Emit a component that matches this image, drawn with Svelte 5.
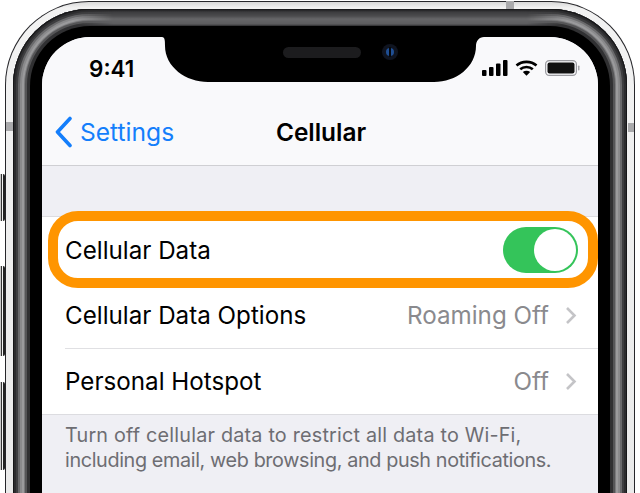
<script>
  const rows = [
    { label: 'Cellular Data Options', value: 'Roaming Off' },
    { label: 'Personal Hotspot', value: 'Off' }
  ];
</script>

<div class="page">
  <span class="side-btn btn-a"></span>
  <span class="side-btn btn-b"></span>
  <span class="side-btn btn-c"></span>
  <div class="ring-outer">
    <div class="ring-silver">
      <div class="ring-steel">
        <div class="ring-black">
          <div class="screen">
            <svg class="notch" width="322" height="46" viewBox="0 0 322 46">
              <path d="M0 0H322C317 0 314 4 314 9 C314 30 294 45 272 45H46C24 45 3 30 3 9C3 4 3 0 0 0Z" fill="#000" />
              <rect x="121" y="10" width="78" height="11" rx="5.5" fill="#1c1c1e" />
              <circle cx="228" cy="15" r="8" fill="#0f1420" />
              <circle cx="228" cy="15" r="4" fill="#1f4f94" />
              <rect x="227" y="10" width="2" height="10" fill="#05070c" />
            </svg>

            <header class="status">
              <span class="time">9:41</span>
              <div class="indicators">
                <svg width="26" height="16" viewBox="0 0 26 16">
                  <rect x="0" y="10" width="4.5" height="6" rx="1" />
                  <rect x="7" y="7" width="4.5" height="9" rx="1" />
                  <rect x="14" y="3.5" width="4.5" height="12.5" rx="1" />
                  <rect x="21" y="0" width="4.5" height="16" rx="1" />
                </svg>
                <svg width="23" height="16" viewBox="0 0 23 16">
                  <path d="M1.5 5.5C7 .6 16 .6 21.5 5.5" fill="none" stroke="#000" stroke-width="2.6" />
                  <path d="M5.2 9.2C8.6 6.2 14.4 6.2 17.8 9.2" fill="none" stroke="#000" stroke-width="2.6" />
                  <path d="M7.8 12 11.5 15.8 15.2 12C13 10.2 10 10.2 7.8 12Z" />
                </svg>
                <svg width="35" height="16" viewBox="0 0 35 16">
                  <rect x="0.6" y="0.6" width="30.8" height="14.8" rx="3.6" fill="none" stroke="#9b9ba0" stroke-width="1.2" />
                  <rect x="2.5" y="2.5" width="27" height="11" rx="2" fill="#111" />
                  <rect x="33" y="5.5" width="1.5" height="5" rx="0.7" fill="#a5a5a9" />
                </svg>
              </div>
            </header>

            <nav class="navbar">
              <div class="back">
                <svg width="20" height="32" viewBox="0 0 20 32">
                  <path d="M16 2.5 3.5 16 16 29.5" fill="none" stroke="#147efb" stroke-width="3.6" stroke-linecap="round" stroke-linejoin="round" />
                </svg>
                <span>Settings</span>
              </div>
              <h1>Cellular</h1>
            </nav>

            <section class="group">
              <div class="row">
                <span class="label">Cellular Data</span>
                <span class="toggle"><span class="knob"></span></span>
              </div>
              {#each rows as row}
                <div class="row">
                  <span class="label">{row.label}</span>
                  <span class="value">{row.value}</span>
                  <svg class="chev" width="12" height="19" viewBox="0 0 12 19">
                    <path d="M2 2 9.5 9.5 2 17" fill="none" stroke="#c4c4c7" stroke-width="2.6" />
                  </svg>
                </div>
              {/each}
            </section>

            <p class="note">
              <span class="line-a">Turn off cellular data to restrict all data to Wi-Fi,</span>
              <span class="line-b">including email, web browsing, and push notifications.</span>
            </p>

            <div class="highlight"></div>
          </div>
        </div>
      </div>
    </div>
  </div>
  <span class="band band-top"></span>
  <span class="band band-left"></span>
  <span class="band band-right"></span>
</div>

<style>
  :global(body) {
    background: #fff;
  }

  .page {
    position: relative;
    width: 640px;
    height: 493px;
    overflow: hidden;
    background: #fff;
    padding: 1px 5px 0;
    box-sizing: border-box;
    font-family: Inter, "Liberation Sans", sans-serif;
  }

  .side-btn {
    position: absolute;
    left: 0;
    width: 5px;
    background: linear-gradient(90deg, #c8c8c8 0 1px, #333 1px 2px, #f2f2f2 2px 3px, #222 3px 5px);
    border-radius: 0 2px 2px 0;
  }

  .btn-a { top: 174px; height: 47px; }
  .btn-b { top: 266px; height: 90px; }
  .btn-c { top: 382px; height: 88px; }

  .band {
    position: absolute;
    background: #a9a9ab;
  }

  .band-top { left: 506px; top: 1px; width: 8px; height: 8px; }
  .band-left { left: 6px; top: 122px; width: 7px; height: 9px; }
  .band-right { left: 628px; top: 123px; width: 6px; height: 9px; }

  .ring-outer {
    height: 600px;
    padding: 1px 1px 0;
    background: #26262a;
    border-radius: 84px 84px 0 0;
  }

  .ring-silver {
    height: 100%;
    box-sizing: border-box;
    padding: 7px 7px 0;
    background: linear-gradient(180deg, #d8d8d8, #f2f2f2 6px, #e8e8e8);
    border-radius: 83px 83px 0 0;
  }

  .ring-steel {
    position: relative;
    height: 100%;
    box-sizing: border-box;
    padding: 17px 17px 0;
    background: #303032;
    border-radius: 76px 76px 0 0;
    box-shadow:
      inset 0 0 0 1px #161618,
      inset 0 0 0 3px #2c2c2e,
      inset 0 0 0 5px #3e3e40,
      inset 0 0 0 7px #6a6a6c,
      inset 0 0 0 9px #8a8a8c,
      inset 0 0 0 11px #9a9a9c,
      inset 0 0 0 12px #7a7a7c,
      inset 0 0 0 14px #555557;
  }

  /* top edge of the frame is flatter and darker than the sides */
  .ring-steel::before {
    content: "";
    position: absolute;
    left: 60px;
    right: 60px;
    top: 0;
    height: 17px;
    background: linear-gradient(180deg, #161618, #3c3c3e 3px, #4c4c4e 7px, #666668 10px, #5c5c5e 15px, #2c2c2e 17px);
    -webkit-mask-image: linear-gradient(90deg, transparent, #000 40px, #000 calc(100% - 40px), transparent);
    mask-image: linear-gradient(90deg, transparent, #000 40px, #000 calc(100% - 40px), transparent);
  }

  .ring-black {
    height: 100%;
    box-sizing: border-box;
    padding: 11px 12px 0;
    background: #000;
    border-radius: 60px 60px 0 0;
  }

  .screen {
    position: relative;
    width: 556px;
    height: 600px;
    background: #efeff4;
    border-radius: 48px 48px 0 0;
    overflow: hidden;
    color: #000;
  }

  .notch {
    position: absolute;
    left: 120px;
    top: 0;
  }

  .status {
    height: 51px;
    padding: 20px 18px 0 47px;
    box-sizing: border-box;
    display: flex;
    align-items: flex-start;
    justify-content: space-between;
    background: #f9f9fb;
  }

  .time {
    font-size: 22.5px;
    font-weight: 600;
    line-height: 24px;
  }

  .indicators {
    display: flex;
    align-items: center;
    gap: 7px;
    margin-top: 3px;
  }

  .navbar {
    position: relative;
    height: 78px;
    display: flex;
    align-items: center;
    justify-content: center;
    background: #f9f9fb;
    border-bottom: 1px solid #cfcfd3;
    box-sizing: border-box;
  }

  .back {
    position: absolute;
    left: 12px;
    top: 28px;
    display: flex;
    align-items: center;
    gap: 6px;
    color: #147efb;
    font-size: 24.6px;
    line-height: 32px;
  }

  h1 {
    margin: 11px 0 0 2px;
    font-size: 24.4px;
    font-weight: 600;
  }

  .group {
    margin-top: 50px;
    background: #fff;
    border-top: 1px solid #dcdce0;
    border-bottom: 1px solid #dcdce0;
  }

  .row {
    height: 66px;
    margin-left: 23px;
    padding-right: 21px;
    display: flex;
    align-items: center;
    border-bottom: 1px solid #e0e0e3;
    box-sizing: border-box;
  }

  .row:first-child {
    border-bottom: none;
  }

  .row:last-child {
    height: 65px;
    border-bottom: none;
  }

  .label {
    flex: 1;
    font-size: 24.2px;
  }

  .value {
    font-size: 24.2px;
    color: #8a8a8e;
  }

  .chev {
    margin-left: 16px;
  }

  .toggle {
    display: flex;
    justify-content: flex-end;
    width: 75px;
    height: 46px;
    padding: 2px;
    box-sizing: border-box;
    background: #34c45a;
    border-radius: 23px;
    margin-right: -1px;
  }

  .knob {
    width: 42px;
    height: 42px;
    background: #fff;
    border-radius: 50%;
  }

  .note {
    margin: 8px 0 0 23px;
    font-size: 19.8px;
    line-height: 25px;
    color: #6d6d72;
  }

  .note span {
    display: block;
    white-space: nowrap;
  }

  .line-a {
    letter-spacing: 0.2px;
  }

  .line-b {
    letter-spacing: -0.37px;
  }

  .highlight {
    position: absolute;
    left: 6px;
    top: 174px;
    width: 550px;
    height: 77px;
    box-sizing: border-box;
    border: 10px solid #ff9500;
    border-radius: 30px;
  }
</style>
